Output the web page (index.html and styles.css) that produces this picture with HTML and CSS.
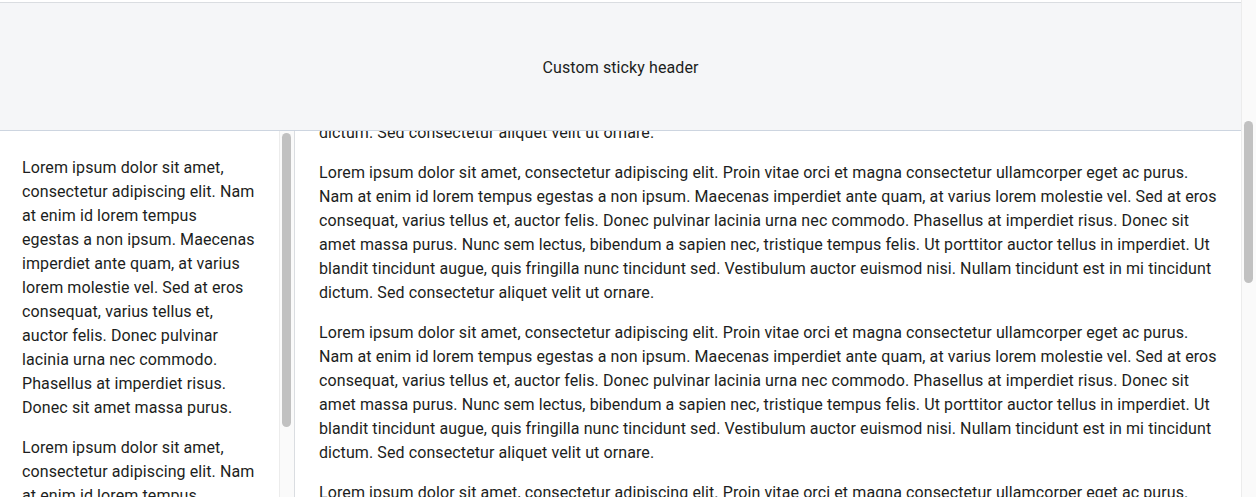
FILE: index.html
```html
<!DOCTYPE html>
<html lang="en">
<head>
    <meta charset="UTF-8">
    <meta name="viewport" content="width=device-width, initial-scale=1.0">
    <title>Custom sticky header</title>
    <link rel="stylesheet" href="styles.css">
</head>
<body>
    <div class="page">
        <div class="main">
            <header class="sticky-header">Custom sticky header</header>
            <div class="layout">
                <aside class="sidebar">
                    <div class="sidebar-text">
                        <p>Lorem ipsum dolor sit amet, consectetur adipiscing elit. Nam at enim id lorem tempus egestas a non ipsum. Maecenas imperdiet ante quam, at varius lorem molestie vel. Sed at eros consequat, varius tellus et, auctor felis. Donec pulvinar lacinia urna nec commodo. Phasellus at imperdiet risus. Donec sit amet massa purus.</p>
                        <p>Lorem ipsum dolor sit amet, consectetur adipiscing elit. Nam at enim id lorem tempus egestas a non ipsum. Maecenas imperdiet ante quam, at varius lorem molestie vel. Sed at eros consequat, varius tellus et, auctor felis. Donec pulvinar lacinia urna nec commodo. Phasellus at imperdiet risus. Donec sit amet massa purus.</p>
                    </div>
                    <div class="scrollbar sidebar-scrollbar">
                        <div class="thumb"></div>
                    </div>
                </aside>
                <main class="content">
                    <p class="tail">dictum. Sed consectetur aliquet velit ut ornare.</p>
                    <p>Lorem ipsum dolor sit amet, consectetur adipiscing elit. Proin vitae orci et magna consectetur ullamcorper eget ac purus. Nam at enim id lorem tempus egestas a non ipsum. Maecenas imperdiet ante quam, at varius lorem molestie vel. Sed at eros consequat, varius tellus et, auctor felis. Donec pulvinar lacinia urna nec commodo. Phasellus at imperdiet risus. Donec sit amet massa purus. Nunc sem lectus, bibendum a sapien nec, tristique tempus felis. Ut porttitor auctor tellus in imperdiet. Ut blandit tincidunt augue, quis fringilla nunc tincidunt sed. Vestibulum auctor euismod nisi. Nullam tincidunt est in mi tincidunt dictum. Sed consectetur aliquet velit ut ornare.</p>
                    <p>Lorem ipsum dolor sit amet, consectetur adipiscing elit. Proin vitae orci et magna consectetur ullamcorper eget ac purus. Nam at enim id lorem tempus egestas a non ipsum. Maecenas imperdiet ante quam, at varius lorem molestie vel. Sed at eros consequat, varius tellus et, auctor felis. Donec pulvinar lacinia urna nec commodo. Phasellus at imperdiet risus. Donec sit amet massa purus. Nunc sem lectus, bibendum a sapien nec, tristique tempus felis. Ut porttitor auctor tellus in imperdiet. Ut blandit tincidunt augue, quis fringilla nunc tincidunt sed. Vestibulum auctor euismod nisi. Nullam tincidunt est in mi tincidunt dictum. Sed consectetur aliquet velit ut ornare.</p>
                    <p>Lorem ipsum dolor sit amet, consectetur adipiscing elit. Proin vitae orci et magna consectetur ullamcorper eget ac purus. Nam at enim id lorem tempus egestas a non ipsum. Maecenas imperdiet ante quam, at varius lorem molestie vel. Sed at eros consequat, varius tellus et, auctor felis. Donec pulvinar lacinia urna nec commodo. Phasellus at imperdiet risus. Donec sit amet massa purus.</p>
                </main>
            </div>
        </div>
        <div class="scrollbar page-scrollbar">
            <div class="thumb"></div>
        </div>
    </div>
</body>
</html>
```

FILE: styles.css
```css
html, body {
    margin: 0;
    height: 100%;
    overflow: hidden;
}
body {
    font-family: Roboto, "Liberation Sans", sans-serif;
    font-size: 16px;
    line-height: 24px;
    letter-spacing: 0.1px;
    color: #1c1e21;
    background-color: white;
}
p {
    margin: 0 0 16px;
}
.page {
    display: flex;
    height: 497px;
}
.main {
    flex: 1;
    display: flex;
    flex-direction: column;
    min-width: 0;
}
.sticky-header {
    margin-top: 2px;
    height: 125px;
    padding-top: 2px;
    flex-shrink: 0;
    display: flex;
    align-items: center;
    justify-content: center;
    background-color: #f5f6f8;
    border-top: 1px solid #dadde1;
    border-bottom: 1px solid #cdd5e0;
    position: relative;
    z-index: 1;
}
.layout {
    flex: 1;
    display: flex;
    min-height: 0;
}
.sidebar {
    width: 294px;
    display: flex;
    border-right: 1px solid #dadde1;
    flex-shrink: 0;
}
.sidebar-text {
    flex: 1;
    padding: 25px 23px 0 22px;
    overflow: hidden;
}
.content {
    flex: 1;
    padding: 0 24px;
    overflow: hidden;
}
.tail {
    margin-top: -10px;
}
.scrollbar {
    width: 15px;
    box-sizing: border-box;
    border-left: 1px solid #ececec;
    background-color: #fafafa;
    display: flex;
    flex-direction: column;
    align-items: center;
}
.thumb {
    width: 9px;
    margin-left: -1px;
    border-radius: 5px;
    background-color: #c1c1c1;
}
.sidebar-scrollbar .thumb {
    margin-top: 2px;
    height: 294px;
}
.page-scrollbar .thumb {
    margin-top: 121px;
    height: 162px;
}
```
